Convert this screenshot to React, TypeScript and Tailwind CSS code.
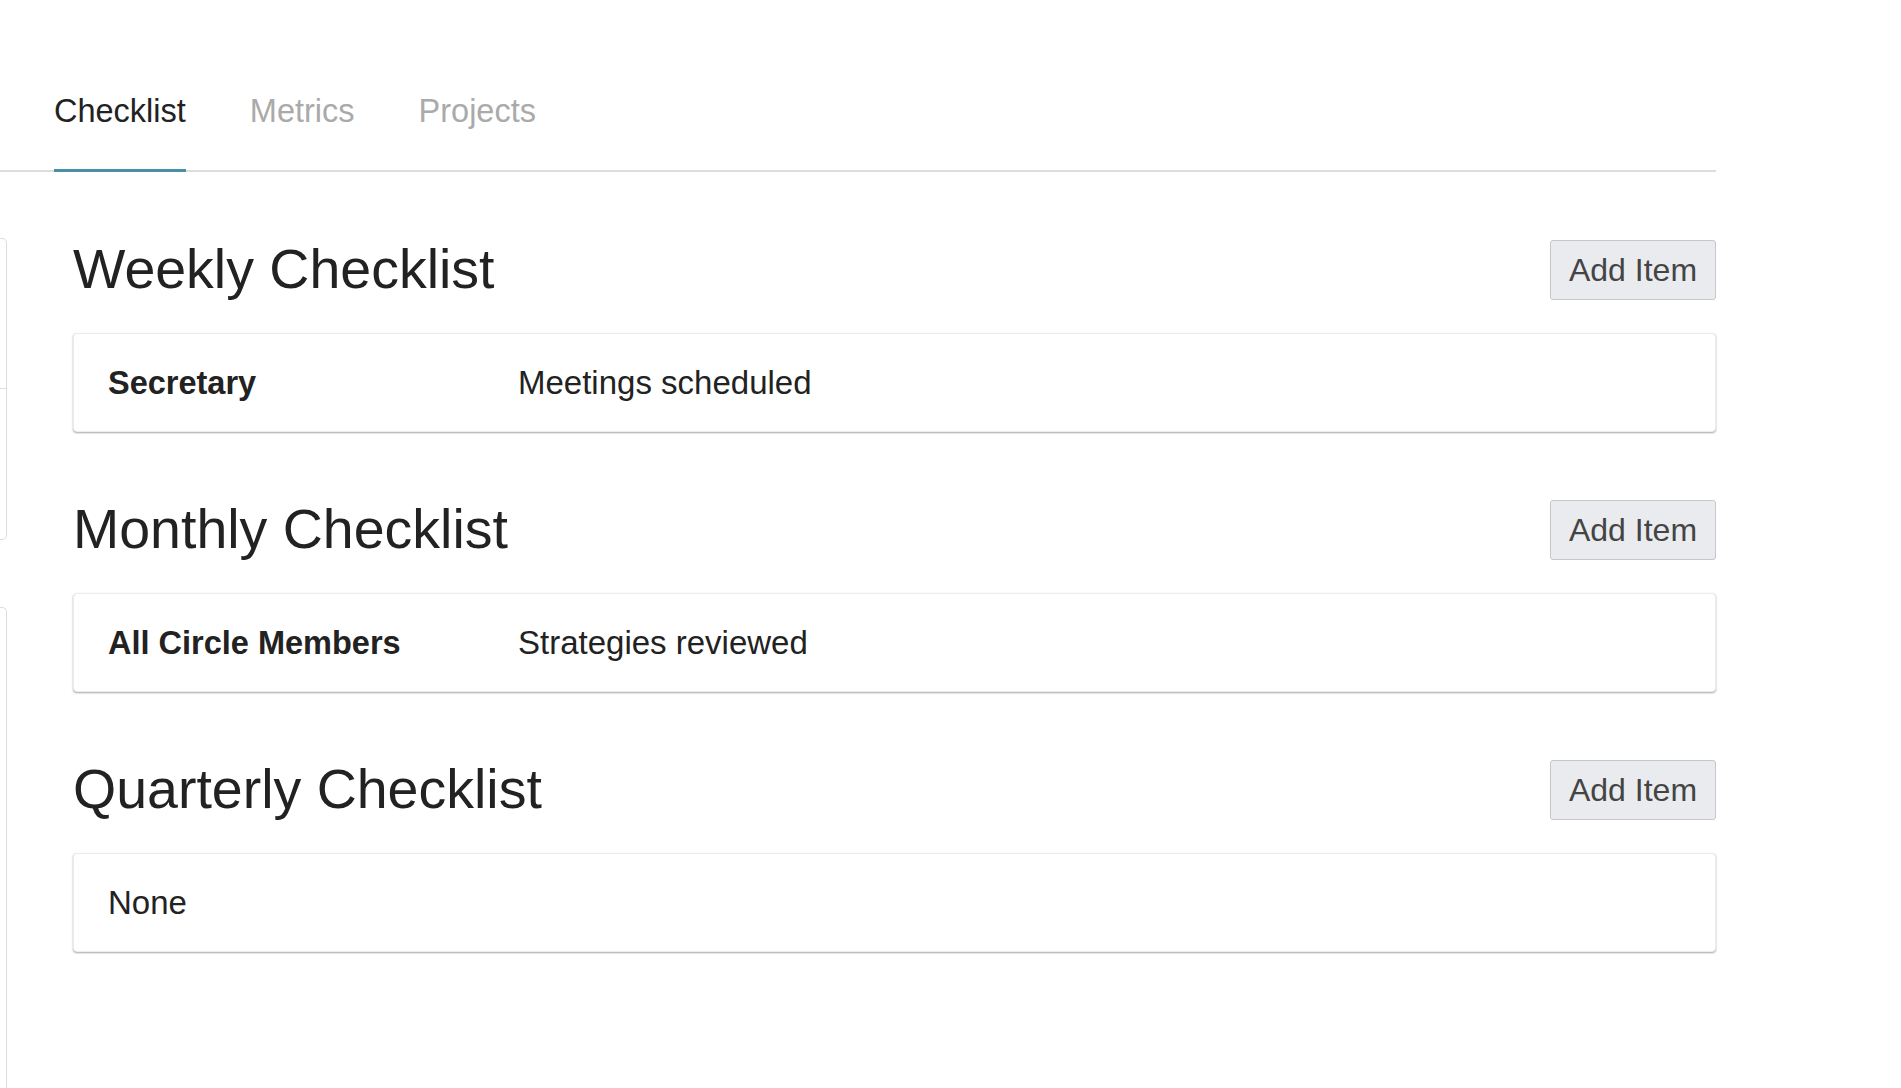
import React from "react";

type Row = { role: string; task: string };

type Section = {
  title: string;
  rows: Row[];
};

const sections: Section[] = [
  { title: "Weekly Checklist", rows: [{ role: "Secretary", task: "Meetings scheduled" }] },
  { title: "Monthly Checklist", rows: [{ role: "All Circle Members", task: "Strategies reviewed" }] },
  { title: "Quarterly Checklist", rows: [] },
];

const tabs = ["Checklist", "Metrics", "Projects"];

function Tabs() {
  return (
    <div className="flex gap-[64px] border-b-2 border-[#dddddd] pl-[54px] pt-[91px]">
      {tabs.map((t, i) => (
        <button
          key={t}
          type="button"
          className={[
            "-mb-[2px] border-b-[3px] pb-[38px] text-[32.5px] leading-[40px]",
            i === 0 ? "border-[#4a8fa6] text-[#222222]" : "border-transparent text-[#aaaaaa]",
          ].join(" ")}
        >
          {t}
        </button>
      ))}
    </div>
  );
}

function ChecklistSection({ section }: { section: Section }) {
  return (
    <section className="mt-[68px]">
      <div className="flex h-[60px] items-center justify-between">
        <h2 className="text-[55.5px] font-normal leading-none text-[#222222]">{section.title}</h2>
        <button
          type="button"
          className="h-[60px] w-[166px] rounded-[3px] border border-[#c6c8ca] bg-[#e9ebee] text-[32px] leading-none text-[#444444]"
        >
          Add Item
        </button>
      </div>
      <div className="mt-[33px] rounded-[4px] border border-[#ececec] bg-white shadow-[0_1px_2px_rgba(0,0,0,0.35)]">
        {section.rows.length === 0 ? (
          <div className="flex h-[97px] items-center px-[34px] text-[33px] leading-[40px]">None</div>
        ) : (
          section.rows.map((r) => (
            <div key={r.role} className="flex h-[97px] items-center px-[34px] text-[33px] leading-[40px]">
              <span className="w-[410px] text-[32.5px] font-bold">{r.role}</span>
              <span>{r.task}</span>
            </div>
          ))
        )}
      </div>
    </section>
  );
}

export default function App() {
  return (
    <div className="h-screen overflow-hidden bg-white font-[family-name:'Liberation_Sans',Arial,sans-serif] text-[#222222]">
      <div className="w-[1716px]">
        <Tabs />
        <div className="flex">
          {/* side panels, scrolled mostly out of view */}
          <div className="w-[7px] shrink-0">
            <div className="mt-[66px] h-[302px] rounded-r-[5px] border border-l-0 border-[#dddddd]">
              <div className="h-[150px] border-b border-[#dddddd]" />
            </div>
            <div className="mt-[67px] h-[490px] rounded-tr-[5px] border border-b-0 border-l-0 border-[#dddddd]" />
          </div>
          <main className="ml-[66px] flex-1">
            {sections.map((s) => (
              <ChecklistSection key={s.title} section={s} />
            ))}
          </main>
        </div>
      </div>
    </div>
  );
}
